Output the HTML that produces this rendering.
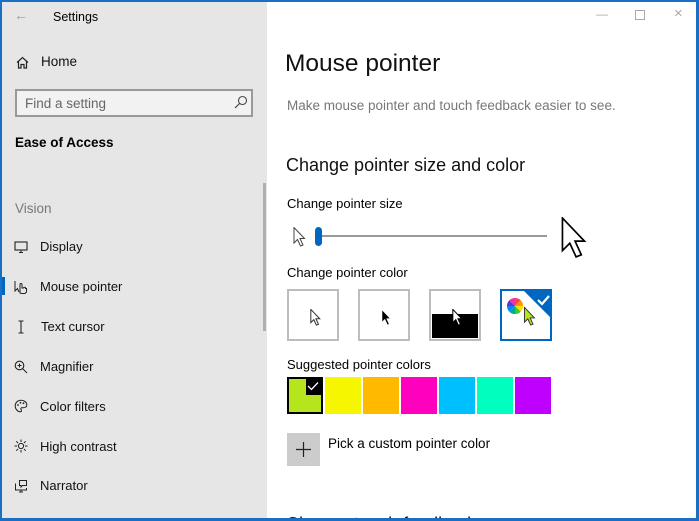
<!DOCTYPE html>
<html style="width:699px;height:521px;overflow:hidden"><head><style>
*{margin:0;padding:0;box-sizing:border-box}
body{width:699px;height:521px;overflow:hidden;font-family:"Liberation Sans",sans-serif;background:#fff;position:relative;color:#000}
.a{position:absolute;white-space:nowrap}
#side{position:absolute;left:0;top:0;width:267px;height:521px;background:#e6e6e6}
.nav{font-size:13px;color:#111}
.ic{position:absolute;left:14px;width:14px;height:14px}
.sw{position:absolute;top:377px;width:36px;height:37px}
.box{position:absolute;top:289px;width:52px;height:52px;border:2px solid #bdbdbd;background:#fff}
</style></head><body>
<div id="side">
 <div class="a" style="left:14px;top:7px;color:#999;font-size:14px">&#8592;</div>
 <div class="a" style="left:53px;top:10px;font-size:12.5px">Settings</div>
 <svg class="a" style="left:16px;top:56px" width="13" height="13" viewBox="0 0 13 13"><path d="M1 6.5L6.5 1.5L12 6.5M2.5 5.5V12H5V8.5H8V12H10.5V5.5" fill="none" stroke="#222" stroke-width="1.2"/></svg>
 <div class="a nav" style="left:41px;top:54px;font-size:13.5px">Home</div>
 <div class="a" style="left:15px;top:89px;width:238px;height:28px;border:2px solid #999;background:#f2f2f2"></div>
 <div class="a" style="left:25px;top:96px;font-size:13.5px;color:#666">Find a setting</div>
 <svg class="a" style="left:234px;top:95px" width="14" height="14" viewBox="0 0 14 14"><circle cx="8.5" cy="5.5" r="4" fill="none" stroke="#444" stroke-width="1.1"/><path d="M5.5 8.5L1 13" stroke="#444" stroke-width="1.2"/></svg>
 <div class="a" style="left:15px;top:135px;font-size:13.5px;font-weight:bold">Ease of Access</div>
 <div class="a" style="left:15px;top:201px;font-size:13.5px;color:#777">Vision</div>
 <div class="a" style="left:263px;top:183px;width:3px;height:148px;background:#b0b0b0"></div>
 <div class="a" style="left:2px;top:277px;width:3px;height:18px;background:#0067c0"></div>
 <svg class="ic" style="top:240px" viewBox="0 0 14 14"><rect x="1" y="2" width="12" height="8" fill="none" stroke="#222" stroke-width="1.1"/><path d="M5 12.5H9M7 10V12.5" stroke="#222"/></svg>
 <div class="a nav" style="left:40px;top:239px">Display</div>
 <svg class="ic" style="top:280px" viewBox="0 0 14 14"><path d="M1 1V11L3.5 8.5L5 12" fill="none" stroke="#222"/><path d="M6 13V4.5a1 1 0 0 1 2 0V8h1.5a1 1 0 0 1 2 .5h1V12L11 13.5H7.5Z" fill="none" stroke="#222"/></svg>
 <div class="a nav" style="left:40px;top:279px">Mouse pointer</div>
 <svg class="ic" style="top:320px" viewBox="0 0 14 14"><path d="M4.5 1H9.5M4.5 13H9.5M7 1V13" stroke="#222" stroke-width="1.1"/></svg>
 <div class="a nav" style="left:41px;top:319px">Text cursor</div>
 <svg class="ic" style="top:360px" viewBox="0 0 14 14"><circle cx="5.5" cy="5.5" r="4.3" fill="none" stroke="#222" stroke-width="1.1"/><path d="M8.5 8.5L13 13M3.5 5.5H7.5M5.5 3.5V7.5" stroke="#222"/></svg>
 <div class="a nav" style="left:40px;top:359px">Magnifier</div>
 <svg class="ic" style="top:399px" viewBox="0 0 14 14"><path d="M7 1.2C3.5 1.2 1.2 3.8 1.2 7s2.6 5.8 5.2 5.8c1.4 0 1.2-1.6.6-2.3-.6-.8.1-2 1.3-1.8 2.4.3 4.5-.5 4.5-3C12.8 3.3 10.3 1.2 7 1.2Z" fill="none" stroke="#222"/><circle cx="4" cy="6" r=".9" fill="#222"/><circle cx="6.5" cy="3.8" r=".9" fill="#222"/><circle cx="9.5" cy="4.2" r=".9" fill="#222"/></svg>
 <div class="a nav" style="left:40px;top:399px">Color filters</div>
 <svg class="ic" style="top:439px" viewBox="0 0 14 14"><circle cx="7" cy="7" r="2.6" fill="none" stroke="#222"/><path d="M7 0.5V3M7 11V13.5M0.5 7H3M11 7H13.5M2.3 2.3L4 4M10 10L11.7 11.7M2.3 11.7L4 10M10 4L11.7 2.3" stroke="#222"/></svg>
 <div class="a nav" style="left:40px;top:439px">High contrast</div>
 <svg class="ic" style="top:479px" viewBox="0 0 14 14"><path d="M1.5 4.5V11H12.5V9M5 13H9M7 11V13" fill="none" stroke="#222"/><path d="M5.5 1.5H12.5V6.5H8.5L7 8V6.5H5.5Z" fill="none" stroke="#222"/></svg>
 <div class="a nav" style="left:40px;top:478px">Narrator</div>
</div>
<div class="a" style="left:596px;top:7px;color:#aaa;font-size:12px">&#8212;</div>
<div class="a" style="left:635px;top:10px;width:10px;height:10px;border:1px solid #aaa"></div>
<div class="a" style="left:674px;top:5px;color:#aaa;font-size:15px">&#215;</div>

<div class="a" style="left:285px;top:50px;font-size:24.5px;color:#111">Mouse pointer</div>
<div class="a" style="left:287px;top:98px;font-size:13.5px;color:#777">Make mouse pointer and touch feedback easier to see.</div>
<div class="a" style="left:286px;top:155px;font-size:18px;color:#111">Change pointer size and color</div>
<div class="a" style="left:287px;top:196px;font-size:13px">Change pointer size</div>
<svg class="a" style="left:293px;top:227px" width="13" height="20" viewBox="0 0 12 20"><path d="M.5 .5V16L4 12.5L7 19L9.5 18L6.5 11.5H11Z" fill="#fff" stroke="#444"/></svg>
<div class="a" style="left:320px;top:235px;width:227px;height:2px;background:#999"></div>
<div class="a" style="left:315px;top:227px;width:7px;height:19px;border-radius:4px;background:#0067c0"></div>
<svg class="a" style="left:560px;top:217px" width="28" height="42" viewBox="0 0 12 20"><path d="M.5 .5V16L4 12.5L7 19L9.5 18L6.5 11.5H11Z" fill="#fff" stroke="#000" stroke-width=".8"/></svg>
<div class="a" style="left:287px;top:265px;font-size:13px">Change pointer color</div>

<div class="box" style="left:287px"><svg style="position:absolute;left:21px;top:18px" width="11" height="17" viewBox="0 0 12 20"><path d="M.5 .5V16L4 12.5L7 19L9.5 18L6.5 11.5H11Z" fill="#fff" stroke="#333" stroke-width="1.2"/></svg></div>
<div class="box" style="left:358px"><svg style="position:absolute;left:21px;top:18px" width="11" height="17" viewBox="0 0 12 20"><path d="M.5 .5V16L4 12.5L7 19L9.5 18L6.5 11.5H11Z" fill="#000" stroke="#fff" stroke-width="1"/></svg></div>
<div class="box" style="left:429px"><div style="position:absolute;left:1px;top:23px;width:46px;height:24px;background:#000"></div><svg style="position:absolute;left:21px;top:18px" width="11" height="17" viewBox="0 0 12 20"><path d="M.5 .5V16L4 12.5L7 19L9.5 18L6.5 11.5H11Z" fill="#fff" stroke="#000" stroke-width="1.2"/></svg></div>
<div class="box" style="left:500px;border-color:#0067c0">
 <svg style="position:absolute;left:0;top:0" width="50" height="50"><path d="M22 0H50V28Z" fill="#0067c0"/><path d="M36 9L40 13L47 5" fill="none" stroke="#fff" stroke-width="2.2"/>
 <g transform="translate(13,15)"><path d="M0 0L0-8A8 8 0 0 1 5.7-5.7Z" fill="#f44"/><path d="M0 0L5.7-5.7A8 8 0 0 1 8 0Z" fill="#f90"/><path d="M0 0L8 0A8 8 0 0 1 5.7 5.7Z" fill="#fd0"/><path d="M0 0L5.7 5.7A8 8 0 0 1 0 8Z" fill="#3c3"/><path d="M0 0L0 8A8 8 0 0 1-5.7 5.7Z" fill="#0a8"/><path d="M0 0L-5.7 5.7A8 8 0 0 1-8 0Z" fill="#08f"/><path d="M0 0L-8 0A8 8 0 0 1-5.7-5.7Z" fill="#63c"/><path d="M0 0L-5.7-5.7A8 8 0 0 1 0-8Z" fill="#e3a"/></g>
 <path transform="translate(22,16) scale(.95)" d="M.5 .5V16L4 12.5L7 19L9.5 18L6.5 11.5H11Z" fill="#b5e61d" stroke="#333" stroke-width="1"/></svg>
</div>

<div class="a" style="left:287px;top:357px;font-size:13px">Suggested pointer colors</div>
<div class="sw" style="left:287px;background:#000;border:1px solid #000"><div style="position:absolute;left:1px;top:1px;width:17px;height:33px;background:#b5e61d"></div><div style="position:absolute;left:1px;top:17px;width:32px;height:17px;background:#b5e61d"></div><svg style="position:absolute;left:19px;top:3px" width="12" height="10"><path d="M1 5L4.5 8.5L11 1.5" fill="none" stroke="#fff" stroke-width="1.3"/></svg></div>
<div class="sw" style="left:325px;background:#f6f600"></div>
<div class="sw" style="left:363px;background:#ffba00"></div>
<div class="sw" style="left:401px;background:#ff00bf"></div>
<div class="sw" style="left:439px;background:#00bfff"></div>
<div class="sw" style="left:477px;background:#00ffbf"></div>
<div class="sw" style="left:515px;background:#bf00ff"></div>

<div class="a" style="left:287px;top:433px;width:33px;height:33px;background:#ccc"></div>
<svg class="a" style="left:295px;top:441px" width="17" height="17"><path d="M8.5 1V16M1 8.5H16" stroke="#222" stroke-width="1.2"/></svg>
<div class="a" style="left:328px;top:436px;font-size:13.5px">Pick a custom pointer color</div>
<div class="a" style="left:280px;top:505px;width:300px;height:13px;overflow:hidden"><div class="a" style="left:6px;top:9px;font-size:18px;color:#111">Change touch feedback</div></div>

<div class="a" style="left:0;top:0;width:699px;height:2px;background:#1a6fc4"></div>
<div class="a" style="left:0;top:0;width:2px;height:521px;background:#1a6fc4"></div>
<div class="a" style="left:696px;top:0;width:3px;height:521px;background:#1a6fc4"></div>
<div class="a" style="left:0;top:518px;width:699px;height:3px;background:#1a6fc4"></div>
</body></html>
